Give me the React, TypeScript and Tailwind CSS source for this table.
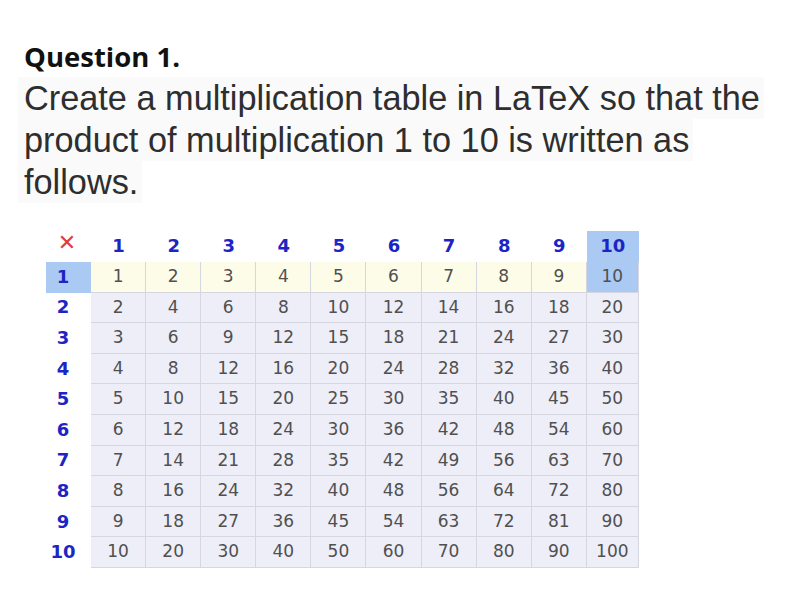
const cols = [1, 2, 3, 4, 5, 6, 7, 8, 9, 10];

function HeadCell({ n }: { n: number }) {
  const hl = n === 10;
  return (
    <div
      className={
        "flex h-[31px] items-end justify-center pb-[3px] text-[18px] font-bold text-[#1c25c4] " +
        (hl ? "bg-[#aac9f3]" : "")
      }
    >
      {n}
    </div>
  );
}

function Cell({ r, c }: { r: number; c: number }) {
  let bg = "bg-[#eeeef8]";
  if (r === 1) bg = "bg-[#fcfce9]";
  if (r === 1 && c === 10) bg = "bg-[#aac9f3]";
  return (
    <div
      className={
        "flex h-[30.6px] items-center justify-center border-r border-b border-[#d6d6e0] text-[17px] text-[#505050] " +
        bg
      }
    >
      {r * c}
    </div>
  );
}

export default function App() {
  return (
    <div className="min-h-[597px] w-[800px] bg-white">
      <div className="pl-[24px] pt-[39px]">
        <h2
          className="text-[27.5px] leading-[35px] font-bold text-[#111]"
          style={{ fontFamily: "'Open Sans', Lato, sans-serif" }}
        >
          Question 1.
        </h2>
        <div
          className="-ml-[6px] mt-[3px] text-[34.3px] leading-[42px] text-[#2e2e2e]"
          style={{ fontFamily: "'Liberation Sans', Arial, sans-serif" }}
        >
          <div className="w-fit bg-[#fafafa] pl-[6px] pr-[4px]">Create a multiplication table in LaTeX so that the</div>
          <div className="w-fit bg-[#fafafa] pl-[6px] pr-[4px]">product of multiplication 1 to 10 is written as</div>
          <div className="w-fit bg-[#fafafa] pl-[6px] pr-[4px]">follows.</div>
        </div>
      </div>

      <div
        className="ml-[46px] mt-[28px] grid w-fit grid-cols-[45px_repeat(9,55.1px)_52px]"
        style={{ fontFamily: "'DejaVu Sans', Verdana, sans-serif" }}
      >
        <div className="flex h-[31px] items-start justify-center pr-[3px] pt-[1px] text-[22px] leading-[22px] text-[#e23b3b]">
          ✕
        </div>
        {cols.map((c) => (
          <HeadCell key={c} n={c} />
        ))}
        {cols.map((r) => (
          <div key={r} className="contents">
            <div
              className={
                "flex h-[30.6px] items-center justify-center pb-[2px] pr-[11px] text-[18px] font-bold text-[#1c25c4] " +
                (r === 1 ? "bg-[#aac9f3]" : "")
              }
            >
              {r}
            </div>
            {cols.map((c) => (
              <Cell key={c} r={r} c={c} />
            ))}
          </div>
        ))}
      </div>
    </div>
  );
}
